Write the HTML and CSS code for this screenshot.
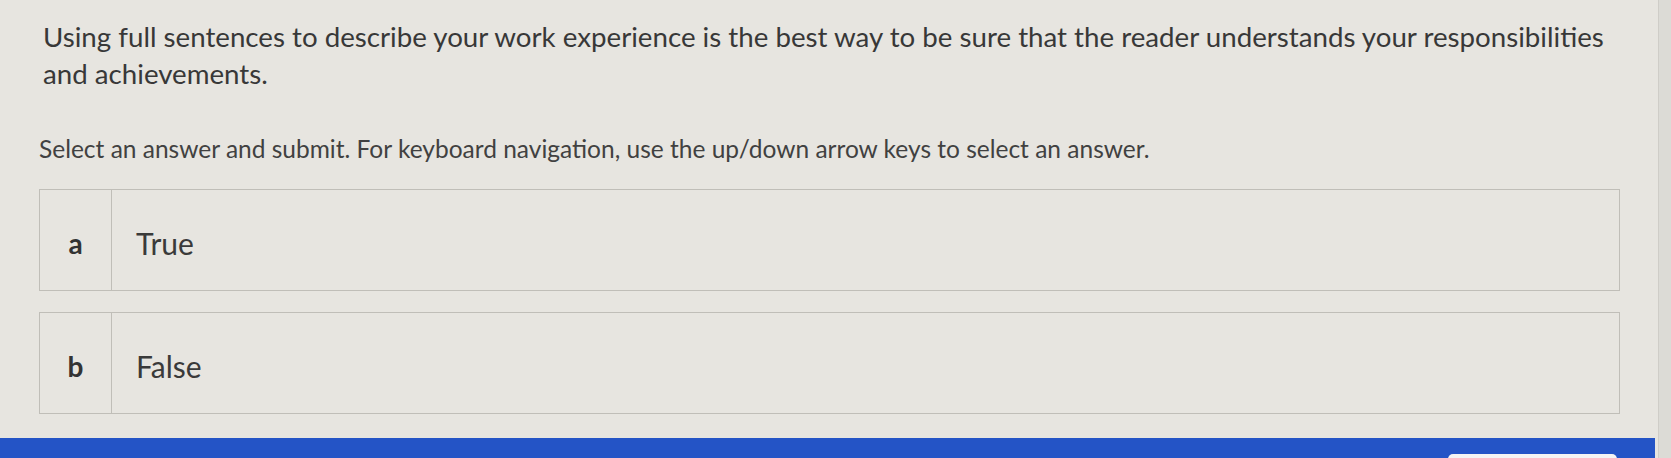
FILE: index.html
```html
<!DOCTYPE html>
<html lang="en">
<head>
<meta charset="utf-8">
<title>Question</title>
<link rel="stylesheet" href="styles.css">
</head>
<body>
<div class="screen">
  <main class="page">
    <h1 class="question">Using full sentences to describe your work experience is the best way to be sure that the reader understands your responsibilities and achievements.</h1>
    <p class="instructions">Select an answer and submit. For keyboard navigation, use the up/down arrow keys to select an answer.</p>
    <div class="options">
      <div class="option"><span class="letter">a</span><span class="label">True</span></div>
      <div class="option"><span class="letter">b</span><span class="label">False</span></div>
    </div>
    <div class="footer-bar"><span class="footer-btn"></span></div>
  </main>
  <div class="edge"></div>
</div>
</body>
</html>
```
FILE: styles.css
```css
html, body {
  margin: 0;
  padding: 0;
  height: 100%;
}
body {
  background: #dddcd7;
  font-family: "Lato", "Liberation Sans", sans-serif;
  overflow: hidden;
}
.screen {
  display: flex;
  height: 458px;
}
.page {
  width: 1658px;
  background: #e7e5e0;
  display: flex;
  flex-direction: column;
  position: relative;
}
.edge {
  flex: 1;
  background: #dcdbd6;
  border-left: 1px solid #cfcdc8;
}
.question {
  margin: 18px 0 0 43px;
  width: 1575px;
  font-weight: 400;
  font-size: 27.7px;
  line-height: 37px;
  color: #383838;
}
.instructions {
  margin: 42px 0 0 39px;
  font-size: 24.5px;
  line-height: 30px;
  color: #414141;
}
.options {
  margin: 25px 0 0 39px;
  width: 1581px;
  display: flex;
  flex-direction: column;
  gap: 21px;
}
.option {
  display: flex;
  height: 102px;
  border: 1.5px solid #c0beb8;
  box-sizing: border-box;
}
.letter {
  width: 72px;
  border-right: 1.5px solid #c0beb8;
  text-align: center;
  padding-top: 35px;
  font-weight: 700;
  font-size: 28px;
  line-height: 36px;
  color: #333;
  box-sizing: border-box;
}
.label {
  padding: 35px 0 0 24px;
  font-size: 30px;
  line-height: 36px;
  color: #3a3a3a;
}
.footer-bar {
  margin-top: auto;
  height: 20px;
  width: 1655px;
  background: #2454c6;
  position: relative;
}
.footer-btn {
  position: absolute;
  left: 1448px;
  top: 16px;
  width: 169px;
  height: 20px;
  background: #f4f4f4;
  border-radius: 5px;
}
```
